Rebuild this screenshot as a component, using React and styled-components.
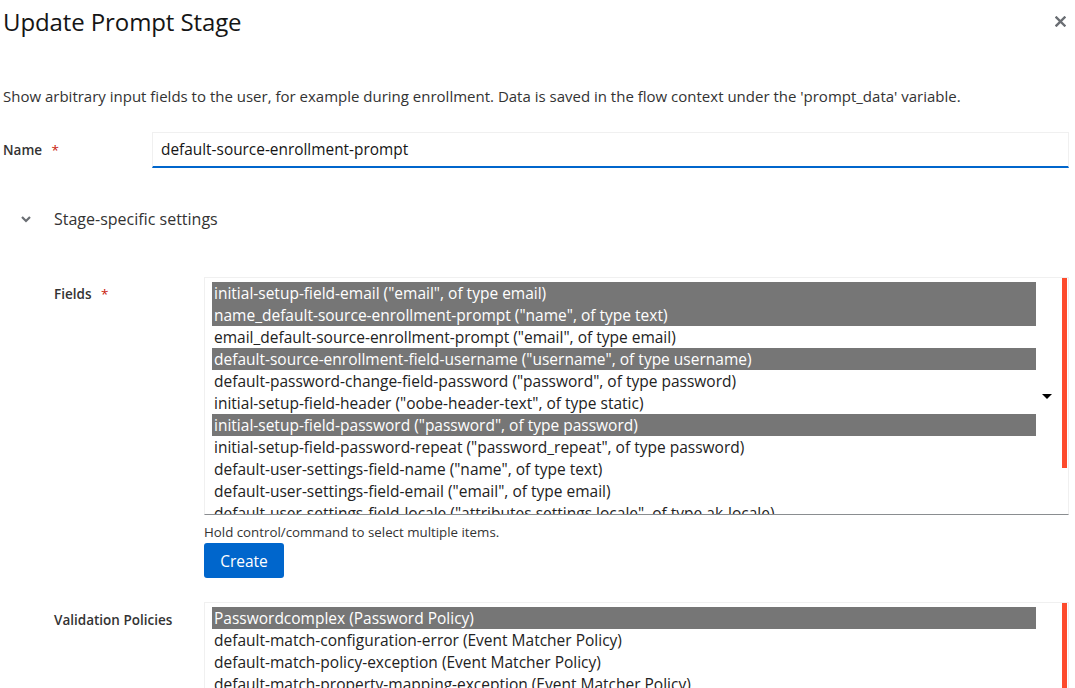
import React from "react";
import styled, { createGlobalStyle } from "styled-components";

const GlobalStyle = createGlobalStyle`
  html, body {
    margin: 0;
    padding: 0;
    background: #fff;
  }
  body {
    font-family: "Open Sans", "Noto Sans", sans-serif;
    color: #151515;
    overflow: hidden;
  }
`;

const fieldOptions = [
  { label: 'initial-setup-field-email ("email", of type email)', selected: true },
  { label: 'name_default-source-enrollment-prompt ("name", of type text)', selected: true },
  { label: 'email_default-source-enrollment-prompt ("email", of type email)' },
  { label: 'default-source-enrollment-field-username ("username", of type username)', selected: true },
  { label: 'default-password-change-field-password ("password", of type password)' },
  { label: 'initial-setup-field-header ("oobe-header-text", of type static)' },
  { label: 'initial-setup-field-password ("password", of type password)', selected: true },
  { label: 'initial-setup-field-password-repeat ("password_repeat", of type password)' },
  { label: 'default-user-settings-field-name ("name", of type text)' },
  { label: 'default-user-settings-field-email ("email", of type email)' },
  { label: 'default-user-settings-field-locale ("attributes.settings.locale", of type ak-locale)' },
];

const policyOptions = [
  { label: "Passwordcomplex (Password Policy)", selected: true },
  { label: "default-match-configuration-error (Event Matcher Policy)" },
  { label: "default-match-policy-exception (Event Matcher Policy)" },
  { label: "default-match-property-mapping-exception (Event Matcher Policy)" },
];

export default function App() {
  return (
    <>
      <GlobalStyle />
      <Page>
        <Header>
          <Title>Update Prompt Stage</Title>
          <CloseButton aria-label="Close">
            <svg width="11" height="11" viewBox="0 0 11 11">
              <path d="M1.5 1.5 L9.5 9.5 M9.5 1.5 L1.5 9.5" stroke="#6a6e73" strokeWidth="2.4" strokeLinecap="square" />
            </svg>
          </CloseButton>
        </Header>

        <Description>
          Show arbitrary input fields to the user, for example during enrollment. Data is saved in the flow context under the 'prompt_data' variable.
        </Description>

        <FormRow $mt={26}>
          <Label $width={149}>
            Name <Required>*</Required>
          </Label>
          <TextInput defaultValue="default-source-enrollment-prompt" />
        </FormRow>

        <Section>
          <SectionToggle>
            <svg width="10" height="7" viewBox="0 0 10 7">
              <path d="M1 1 L5 5 L9 1" stroke="#6a6e73" strokeWidth="2.2" fill="none" />
            </svg>
          </SectionToggle>
          <SectionTitle>Stage-specific settings</SectionTitle>
        </Section>

        <SubForm>
          <FormRow $top>
            <Label $width={150} $pt={8}>
              Fields <Required>*</Required>
            </Label>
            <FieldColumn>
              <ListBox $height={238}>
                <Options>
                  {fieldOptions.map((o) => (
                    <Option key={o.label} $selected={o.selected}>
                      {o.label}
                    </Option>
                  ))}
                </Options>
                <Caret />
                <Scrollbar>
                  <Thumb $height={190} />
                </Scrollbar>
              </ListBox>
              <Helper>Hold control/command to select multiple items.</Helper>
              <PrimaryButton>Create</PrimaryButton>
            </FieldColumn>
          </FormRow>

          <FormRow $top $mt={24}>
            <Label $width={150} $pt={9}>
              Validation Policies
            </Label>
            <FieldColumn>
              <ListBox $height={120}>
                <Options>
                  {policyOptions.map((o) => (
                    <Option key={o.label} $selected={o.selected}>
                      {o.label}
                    </Option>
                  ))}
                </Options>
                <Scrollbar>
                  <Thumb $height={120} />
                </Scrollbar>
              </ListBox>
            </FieldColumn>
          </FormRow>
        </SubForm>
      </Page>
    </>
  );
}

const Page = styled.div`
  width: 1075px;
  height: 688px;
  padding: 0 6px 0 3px;
  box-sizing: border-box;
`;

const Header = styled.div`
  display: flex;
  align-items: center;
  justify-content: space-between;
  height: 42px;
`;

const Title = styled.h1`
  margin: 0;
  font-size: 24px;
  font-weight: 400;
  color: #151515;
  letter-spacing: -0.1px;
`;

const CloseButton = styled.button`
  border: 0;
  background: none;
  padding: 0;
  margin-right: 3px;
  display: flex;
`;

const Description = styled.p`
  margin: 44px 0 0;
  font-size: 15px;
  line-height: 20px;
  color: #333;
`;

const FormRow = styled.div`
  display: flex;
  align-items: ${(p) => (p.$top ? "flex-start" : "center")};
  margin-top: ${(p) => (p.$mt ? p.$mt : 0)}px;
`;

const Label = styled.div`
  flex: 0 0 ${(p) => p.$width}px;
  padding-top: ${(p) => p.$pt || 0}px;
  font-size: 13.5px;
  font-weight: 600;
  color: #333;
`;

const Required = styled.span`
  color: #c9190b;
  margin-left: 6px;
  font-weight: 400;
`;

const TextInput = styled.input`
  flex: 1;
  height: 36px;
  box-sizing: border-box;
  border: 1px solid #f0f0f0;
  border-bottom: 2px solid #0066cc;
  padding: 0 8px;
  font-family: inherit;
  font-size: 15.4px;
  color: #151515;
  outline: none;
`;

const Section = styled.div`
  display: flex;
  align-items: center;
  height: 20px;
  margin-top: 41px;
`;

const SectionToggle = styled.span`
  width: 51px;
  padding-left: 18px;
  box-sizing: border-box;
  display: flex;
`;

const SectionTitle = styled.span`
  font-size: 16px;
  color: #333;
`;

const SubForm = styled.div`
  margin-top: 48px;
  padding-left: 51px;
`;

const FieldColumn = styled.div`
  flex: 1;
  display: flex;
  flex-direction: column;
  align-items: flex-start;
`;

const ListBox = styled.div`
  position: relative;
  width: 100%;
  height: ${(p) => p.$height}px;
  box-sizing: border-box;
  border: 1px solid #f0f0f0;
  border-bottom-color: #8a8d90;
  overflow: hidden;
  display: flex;
`;

const Options = styled.div`
  flex: 1;
  padding: 4px 0 0 7px;
  display: flex;
  flex-direction: column;
  min-width: 0;
  margin-right: 23px;
`;

const Option = styled.div`
  flex-shrink: 0;
  height: 22px;
  line-height: 22px;
  padding-left: 2px;
  font-size: 15.5px;
  white-space: nowrap;
  overflow: hidden;
  background: ${(p) => (p.$selected ? "#767676" : "transparent")};
  color: ${(p) => (p.$selected ? "#fff" : "#222")};
`;

const Caret = styled.span`
  position: absolute;
  right: 16px;
  top: 116px;
  width: 0;
  height: 0;
  border-left: 5px solid transparent;
  border-right: 5px solid transparent;
  border-top: 5px solid #000;
`;

const Scrollbar = styled.div`
  width: 9px;
  flex: 0 0 9px;
  display: flex;
  justify-content: flex-end;
  padding-right: 1px;
  box-sizing: border-box;
`;

const Thumb = styled.div`
  width: 5px;
  height: ${(p) => p.$height}px;
  background: #fd4b2d;
`;

const Helper = styled.div`
  margin-top: 9px;
  font-size: 13.3px;
  line-height: 16px;
  color: #333;
`;

const PrimaryButton = styled.button`
  margin-top: 3px;
  width: 80px;
  height: 35px;
  border: 0;
  border-radius: 3px;
  background: #0066cc;
  color: #fff;
  font-family: inherit;
  font-size: 15.5px;
`;
